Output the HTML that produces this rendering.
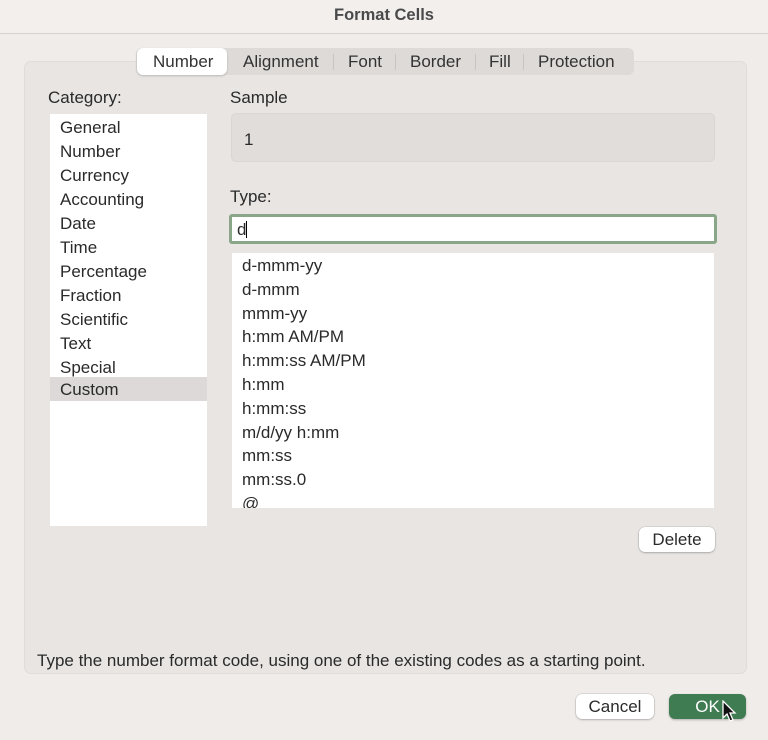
<!DOCTYPE html>
<html><head><meta charset="utf-8"><style>
*{margin:0;padding:0;box-sizing:border-box}
body{width:768px;height:740px;background:#f0ecea;font-family:"Liberation Sans",sans-serif;font-size:17px;color:#2a2a2a;position:relative;overflow:hidden}
.a{position:absolute;white-space:nowrap}
.title{left:0;top:0;width:768px;height:34px;background:#f3efed;border-bottom:1px solid #d6d2d0;text-align:center;line-height:31px;font-weight:bold;color:#4a4a4a;font-size:16.5px}
.panel{left:24px;top:61px;width:723px;height:613px;background:#e8e5e3;border-radius:7px;border:1px solid #e0dcda}
.tabs{left:136px;top:48px;width:498px;height:27px;background:#dedad8;border-radius:6px}
.tl{position:absolute;top:0;line-height:27px;color:#333}
.sep{position:absolute;top:6px;width:1px;height:16px;background:#c8c4c2}
.sel{position:absolute;left:1px;top:0;width:90px;height:27px;background:#fff;border-radius:6px;box-shadow:0 1px 2px rgba(0,0,0,.2)}
.list{background:#fff}
.item{position:absolute;left:0;height:24px;line-height:26px;padding-left:10px;width:100%}
.btn{background:#fff;border-radius:6px;box-shadow:0 0 0 .5px rgba(0,0,0,.15),0 1px 2px rgba(0,0,0,.2);text-align:center;line-height:26px;height:25px}
</style></head><body>
<div class="a title">Format Cells</div>
<div class="a panel"></div>
<div class="a tabs">
<div class="sel"></div>
<div class="tl" style="left:17px">Number</div>
<div class="tl" style="left:107px">Alignment</div>
<div class="sep" style="left:197px"></div>
<div class="tl" style="left:212px">Font</div>
<div class="sep" style="left:259px"></div>
<div class="tl" style="left:274px">Border</div>
<div class="sep" style="left:339px"></div>
<div class="tl" style="left:353px">Fill</div>
<div class="sep" style="left:387px"></div>
<div class="tl" style="left:402px">Protection</div>
</div>
<div class="a" style="left:48px;top:88px">Category:</div>
<div class="a list" style="left:50px;top:114px;width:157px;height:412px">
<div class="item" style="top:1px">General</div>
<div class="item" style="top:25px">Number</div>
<div class="item" style="top:49px">Currency</div>
<div class="item" style="top:73px">Accounting</div>
<div class="item" style="top:97px">Date</div>
<div class="item" style="top:121px">Time</div>
<div class="item" style="top:145px">Percentage</div>
<div class="item" style="top:169px">Fraction</div>
<div class="item" style="top:193px">Scientific</div>
<div class="item" style="top:217px">Text</div>
<div class="item" style="top:241px">Special</div>
<div class="item" style="top:263px;background:#dcd9d8">Custom</div>
</div>
<div class="a" style="left:230px;top:88px">Sample</div>
<div class="a" style="left:231px;top:113px;width:484px;height:49px;background:#e0dddb;border-radius:5px;border:1px solid #dad6d4;padding:16px 0 0 12px">1</div>
<div class="a" style="left:230px;top:187px">Type:</div>
<div class="a" style="left:229px;top:214px;width:488px;height:30px;background:#fff;border:3px solid #89a688;border-radius:3px;padding:4px 0 0 5px;line-height:18px">d<span style="display:inline-block;width:1px;height:17px;background:#000;vertical-align:-3px"></span></div>
<div class="a list" style="left:232px;top:253px;width:482px;height:255px;overflow:hidden">
<div class="item" style="top:0">d-mmm-yy</div>
<div class="item" style="top:24px">d-mmm</div>
<div class="item" style="top:48px">mmm-yy</div>
<div class="item" style="top:71px">h:mm AM/PM</div>
<div class="item" style="top:95px">h:mm:ss AM/PM</div>
<div class="item" style="top:119px">h:mm</div>
<div class="item" style="top:143px">h:mm:ss</div>
<div class="item" style="top:167px">m/d/yy h:mm</div>
<div class="item" style="top:190px">mm:ss</div>
<div class="item" style="top:214px">mm:ss.0</div>
<div class="item" style="top:238px">@</div>
</div>
<div class="a btn" style="left:639px;top:527px;width:76px">Delete</div>
<div class="a" style="left:37px;top:651px">Type the number format code, using one of the existing codes as a starting point.</div>
<div class="a btn" style="left:576px;top:694px;width:78px">Cancel</div>
<div class="a btn" style="left:669px;top:694px;width:77px;background:#3f7c52;color:#fff;box-shadow:0 1px 2px rgba(0,0,0,.25)">OK</div>
<svg class="a" style="left:722px;top:700px" width="16" height="24" viewBox="0 0 16 24"><path d="M1 1 L1 18 L5 14 L8 21 L11 20 L8 13 L13 13 Z" fill="#111" stroke="#fff" stroke-width="1.3"/></svg>
</body></html>
